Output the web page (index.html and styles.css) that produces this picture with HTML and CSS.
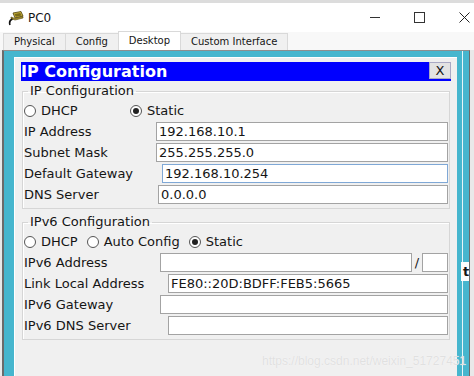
FILE: index.html
```html
<!DOCTYPE html>
<html lang="en">
<head>
  <meta charset="UTF-8">
  <title>PC0</title>
  <link rel="stylesheet" href="styles.css">
</head>
<body>

<!-- window title -->
<div class="top-strip"></div>
<div class="titlebar">
  <svg class="app-icon" width="16" height="15" viewBox="0 0 16 15">
    <path d="M5 2 L13 0.5 L15 5 L7 7 Z" fill="#c9b23a" stroke="#4d3f0c" stroke-width="0.8"/>
    <path d="M6.5 3 L12.3 2 L13.5 4.6 L7.8 5.7 Z" fill="#7a6a18"/>
    <path d="M3 6 L7 7.5 L15 5.5 L15 7 L7 9 L3 7.5 Z" fill="#b59e2c" stroke="#4d3f0c" stroke-width="0.6"/>
    <path d="M4.5 8 C2 9 1 11 2 14" stroke="#111" stroke-width="1.6" fill="none"/>
  </svg>
  <span class="win-title">PC0</span>
  <div class="win-controls">
    <span class="ctl-min"></span>
    <span class="ctl-max"></span>
    <svg class="ctl-close" width="11" height="11" viewBox="0 0 11 11">
      <path d="M0.5 0.5 L10.5 10.5 M10.5 0.5 L0.5 10.5" stroke="#222" stroke-width="1"/>
    </svg>
  </div>
</div>

<!-- tabs -->
<div class="tabs">
  <div class="tab">Physical</div>
  <div class="tab">Config</div>
  <div class="tab active">Desktop</div>
  <div class="tab">Custom Interface</div>
</div>

<!-- desktop frame -->
<div class="frame">
  <div class="panel">
    <div class="dlg-head">
      <span class="dlg-title">IP Configuration</span>
      <span class="dlg-close">X</span>
    </div>

    <fieldset class="group">
      <legend>IP Configuration</legend>
      <div class="group-body">
        <div class="opts">
          <label class="opt opt-wide"><span class="radio"></span>DHCP</label>
          <label class="opt"><span class="radio on"></span>Static</label>
        </div>
        <div class="row"><span class="lbl">IP Address</span><input class="fld" value="192.168.10.1"></div>
        <div class="row"><span class="lbl">Subnet Mask</span><input class="fld" value="255.255.255.0"></div>
        <div class="row"><span class="lbl">Default Gateway</span><input class="fld fld-gw focus" value="192.168.10.254"></div>
        <div class="row"><span class="lbl">DNS Server</span><input class="fld fld-dns" value="0.0.0.0"></div>
      </div>
    </fieldset>

    <fieldset class="group group-v6">
      <legend>IPv6 Configuration</legend>
      <div class="group-body">
        <div class="opts">
          <label class="opt"><span class="radio"></span>DHCP</label>
          <label class="opt"><span class="radio"></span>Auto Config</label>
          <label class="opt"><span class="radio on"></span>Static</label>
        </div>
        <div class="row">
          <span class="lbl">IPv6 Address</span>
          <input class="fld fld-short" value="">
          <span class="slash">/</span>
          <input class="fld fld-prefix" value="">
        </div>
        <div class="row"><span class="lbl">Link Local Address</span><input class="fld fld-far" value="FE80::20D:BDFF:FEB5:5665"></div>
        <div class="row"><span class="lbl">IPv6 Gateway</span><input class="fld fld-short" value=""></div>
        <div class="row"><span class="lbl">IPv6 DNS Server</span><input class="fld fld-far" value=""></div>
      </div>
    </fieldset>
  </div>

  <span class="peek">t</span>
  <div class="watermark">https://blog.csdn.net/weixin_51727451</div>
</div>

</body>
</html>
```

FILE: styles.css
```css
body {
  margin: 0;
  height: 376px;
  overflow: hidden;
  display: flex;
  flex-direction: column;
  background: #e9e9e9;
  font-family: "DejaVu Sans", Verdana, sans-serif;
  color: #151515;
}

.top-strip { height: 3px; background: #dcdcdc; }

.titlebar {
  height: 29px;
  display: flex;
  align-items: center;
  padding-left: 8px;
  background: #fff;
}
.app-icon { margin-right: 4px; margin-top: 1px; }
.win-title { font-size: 12px; }
.win-controls {
  margin-left: auto;
  display: flex;
  align-items: center;
  gap: 34px;
  padding-right: 4px;
}
.ctl-min { width: 10px; height: 1px; background: #333; }
.ctl-max { width: 9px; height: 9px; border: 1px solid #333; }

.tabs {
  height: 18px;
  display: flex;
  align-items: flex-end;
  padding-left: 3px;
  background: #f8f8f8;
}
.tab {
  height: 16px;
  line-height: 16px;
  padding: 0 10px;
  font-size: 10px;
  background: #f0f0f0;
  border: 1px solid #d9d9d9;
  border-bottom: none;
  margin-right: -1px;
}
.tab.active { height: 18px; line-height: 17px; background: #fff; position: relative; }

.frame {
  flex: 1;
  position: relative;
  overflow: hidden;
  display: flex;
  margin: 0 4px 0 2px;
  padding: 6px 12px 0 10px;
  border-left: 2px solid #6b6b6b;
  border-top: 1px solid #8e8e8e;
  border-right: 1px solid #6b6b6b;
  background: linear-gradient(to left, #46b6ce 6px, #e8f6f9 6px, #e8f6f9 7px, #46b6ce 7px);
}

.panel {
  flex: 1;
  padding: 4px 6px 0 6px;
  background: #f0f0f0;
  border-left: 1px solid #fff;
  border-top: 1px solid #fff;
}

.dlg-head {
  height: 19px;
  display: flex;
  background: #0000ff;
}
.dlg-title {
  color: #fff;
  font-weight: bold;
  font-size: 16px;
  line-height: 19px;
}
.dlg-close {
  margin-left: auto;
  width: 20px;
  height: 15px;
  line-height: 15px;
  text-align: center;
  font-size: 13px;
  background: #e3e3e3;
  border: 1px solid #a9a9c4;
}

.group {
  margin: 2px 1px 0 1px;
  padding: 0 1px 4px 1px;
  border: 1px solid #d6d6d6;
  box-shadow: inset 1px 1px 0 #fff;
  min-inline-size: 0;
}
.group-v6 { margin-top: 5px; }
.group legend {
  margin-left: 4px;
  padding: 0 2px;
  font-size: 13px;
  line-height: 16px;
}
.group-body {
  display: flex;
  flex-direction: column;
  gap: 2px;
  padding-top: 2px;
}

.opts { height: 19px; display: flex; align-items: center; font-size: 13px; }
.opt { display: flex; align-items: center; margin-right: 9px; }
.opt-wide { width: 106px; margin-right: 0; }
.radio {
  width: 10px;
  height: 10px;
  border: 1px solid #555;
  border-radius: 50%;
  background: #fff;
  margin-right: 5px;
  position: relative;
}
.radio.on::after {
  content: "";
  position: absolute;
  left: 2px; top: 2px;
  width: 6px; height: 6px;
  border-radius: 50%;
  background: #222;
}

.row { height: 19px; display: flex; align-items: center; }
.lbl { width: 132px; flex: none; font-size: 13px; }
.fld {
  flex: 1;
  min-width: 0;
  height: 19px;
  box-sizing: border-box;
  margin: 0;
  padding: 0 2px;
  border: 1px solid #a3a3a3;
  background: #fff;
  font-family: "DejaVu Sans", Verdana, sans-serif;
  font-size: 13px;
  color: #151515;
  outline: none;
}
.fld.focus { border-color: #7fa8d6; }
.fld-gw { margin-left: 6px; }
.fld-dns { margin-left: 2px; }
.fld-short { margin-left: 4px; }
.fld-far { margin-left: 12px; }
.fld-prefix { flex: none; width: 26px; }
.slash { width: 10px; text-align: center; font-size: 13px; }

.peek {
  position: absolute;
  left: 457px; top: 211px;
  width: 12px; height: 19px;
  line-height: 19px;
  padding-left: 2px;
  box-sizing: border-box;
  background: #fdfdfd;
  font-weight: bold;
  font-size: 13px;
}

.watermark {
  position: absolute;
  left: 258px; top: 303px;
  font-family: "Liberation Sans", Arial, sans-serif;
  font-size: 12px;
  white-space: nowrap;
  color: #e0e0e0;
  text-shadow: 0 0 1px #fff;
}
```
